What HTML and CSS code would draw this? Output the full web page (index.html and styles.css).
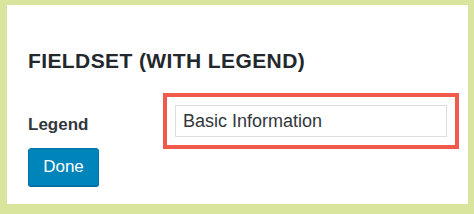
FILE: index.html
```html
<!DOCTYPE html>
<html lang="en">
<head>
    <meta charset="UTF-8">
    <meta name="viewport" content="width=device-width, initial-scale=1.0">
    <title>Fieldset (with legend)</title>
    <link rel="stylesheet" href="styles.css">
</head>
<body>
    <div class="frame">
        <div class="panel">
            <h2 class="panel-title">FIELDSET (WITH LEGEND)</h2>
            <div class="field-row">
                <label class="field-label" for="legend">Legend</label>
                <input type="text" class="field-input highlight" id="legend" value="Basic Information">
            </div>
            <button class="button-primary">Done</button>
        </div>
    </div>
</body>
</html>
```

FILE: styles.css
```css
html, body {
    margin: 0;
    padding: 0;
}
body {
    background: #d9e59c;
    font-family: "Liberation Sans", Arial, sans-serif;
}
.frame {
    width: 474px;
    height: 214px;
    box-sizing: border-box;
    padding: 5px 6px 10px 7px;
}
.panel {
    background: #fff;
    height: 100%;
    box-sizing: border-box;
    padding: 0 21px;
    overflow: hidden;
}
.panel-title {
    margin: 0;
    padding-top: 42px;
    font-size: 21px;
    line-height: 28px;
    letter-spacing: 0.4px;
    font-weight: bold;
    color: #23282d;
}
.field-row {
    display: flex;
    align-items: center;
    margin-top: 30px;
}
.field-label {
    width: 148px;
    font-size: 17px;
    font-weight: bold;
    color: #32373c;
    padding-top: 7px;
}
.field-input {
    width: 274px;
    height: 32px;
    box-sizing: border-box;
    border: 1px solid #ddd;
    padding: 0 7px;
    font-family: "Liberation Sans", Arial, sans-serif;
    font-size: 18px;
    color: #32373c;
    background: #fff;
}
.highlight {
    outline: 4px solid #f05a4b;
    outline-offset: 8px;
}
.button-primary {
    display: block;
    margin-top: 11px;
    width: 71px;
    height: 38px;
    background: #0085ba;
    border: 1px solid #0073aa;
    border-radius: 3px;
    color: #fff;
    font-family: "Liberation Sans", Arial, sans-serif;
    font-size: 17px;
    padding: 0;
    box-shadow: 0 1px 0 #006799;
}
```
